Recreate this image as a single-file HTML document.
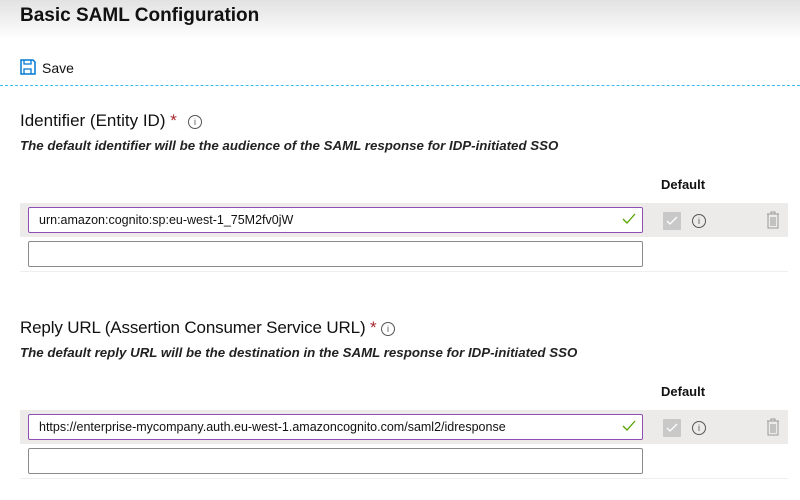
<!DOCTYPE html>
<html><head><style>
body{margin:0;width:800px;height:500px;overflow:hidden;background:#fff;font-family:"Liberation Sans",sans-serif;color:#111;position:relative}
.a{position:absolute}
.top{left:0;top:0;width:800px;height:40px;background:linear-gradient(#e2e2e2,#fff)}
h1{position:absolute;left:20px;top:5px;margin:0;font-size:19px;font-weight:bold;}
.dash{left:0;top:85px;width:800px;border-top:1.5px dashed #3fbdf0}
.h2{left:20px;font-size:17px;white-space:nowrap}
.h2 .s{color:#a4262c}
.it{left:20px;font-size:13.3px;font-style:italic;font-weight:bold;color:#222;white-space:nowrap}
.def{left:661px;font-size:13px;font-weight:bold}
.row{left:20px;width:768px;height:34px;background:#ecebe9}
.inp{left:28px;width:615px;height:26px;border:1.5px solid #8d4fb3;border-radius:2px;background:#fff;font-size:12.5px;line-height:24px;padding-left:10px;box-sizing:border-box}
.inp2{border-color:#8a8a8a;border-width:1px}
.line{left:20px;width:768px;border-top:1px solid #eee}
.cb{width:18px;height:18px;background:#c8c8c8;border-radius:1px}
.info{width:12px;height:12px;border:1.2px solid #555;border-radius:50%;font-size:9px;text-align:center;line-height:12px;color:#555}
</style></head><body>
<div class="a top"></div>
<h1>Basic SAML Configuration</h1>
<svg class="a" style="left:20px;top:59px" width="16" height="16" viewBox="0 0 16 16"><path d="M1 1h12l2 2v12H1z" fill="none" stroke="#0078d4" stroke-width="1.5"/><path d="M4 1v4h7V1M4 15v-5h7v5" fill="none" stroke="#0078d4" stroke-width="1.3"/></svg>
<div class="a" style="left:42px;top:60px;font-size:14px">Save</div>
<div class="a dash"></div>

<div class="a h2" style="top:111px">Identifier (Entity ID) <span class="s">*</span></div>
<div class="a info" style="left:188px;top:115px">i</div>
<div class="a it" style="top:138px">The default identifier will be the audience of the SAML response for IDP-initiated SSO</div>
<div class="a def" style="top:177px">Default</div>
<div class="a row" style="top:203px"></div>
<div class="a inp" style="top:207px">urn:amazon:cognito:sp:eu-west-1_75M2fv0jW</div>
<svg class="a" style="left:622px;top:213px" width="14" height="12"><path d="M1 6l4 4 8-9" fill="none" stroke="#57a300" stroke-width="1.3"/></svg>
<div class="a cb" style="left:663px;top:212px"></div>
<svg class="a" style="left:666px;top:216px" width="12" height="10"><path d="M1 5l3 3 7-7" fill="none" stroke="#fff" stroke-width="1.3"/></svg>
<div class="a info" style="left:692px;top:214px">i</div>
<svg class="a" style="left:766px;top:211px" width="14" height="18"><path d="M1 3h12M5 3V1h4v2M2 3v14h10V3M5 6v9M7 6v9M9 6v9" fill="none" stroke="#999" stroke-width="1"/></svg>
<div class="a inp inp2" style="top:241px"></div>
<div class="a line" style="top:271px"></div>

<div class="a h2" style="top:318px;letter-spacing:-0.15px">Reply URL (Assertion Consumer Service URL)<span class="s"> *</span></div>
<div class="a info" style="left:381px;top:322px">i</div>
<div class="a it" style="top:345px">The default reply URL will be the destination in the SAML response for IDP-initiated SSO</div>
<div class="a def" style="top:384px">Default</div>
<div class="a row" style="top:410px"></div>
<div class="a inp" style="top:414px">https://enterprise-mycompany.auth.eu-west-1.amazoncognito.com/saml2/idresponse</div>
<svg class="a" style="left:622px;top:420px" width="14" height="12"><path d="M1 6l4 4 8-9" fill="none" stroke="#57a300" stroke-width="1.3"/></svg>
<div class="a cb" style="left:663px;top:419px"></div>
<svg class="a" style="left:666px;top:423px" width="12" height="10"><path d="M1 5l3 3 7-7" fill="none" stroke="#fff" stroke-width="1.3"/></svg>
<div class="a info" style="left:692px;top:421px">i</div>
<svg class="a" style="left:766px;top:418px" width="14" height="18"><path d="M1 3h12M5 3V1h4v2M2 3v14h10V3M5 6v9M7 6v9M9 6v9" fill="none" stroke="#999" stroke-width="1"/></svg>
<div class="a inp inp2" style="top:448px"></div>
<div class="a line" style="top:478px"></div>
</body></html>
